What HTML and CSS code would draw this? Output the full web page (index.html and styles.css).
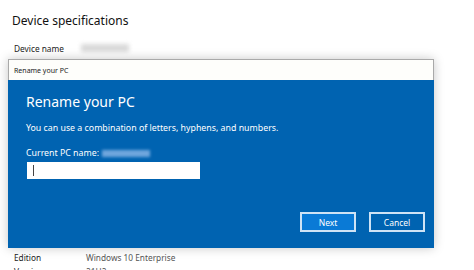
FILE: index.html
```html
<!DOCTYPE html>
<html>
<head>
<meta charset="utf-8">
<link rel="stylesheet" href="styles.css">
</head>
<body>
<div class="page">
  <h1 class="section-title">Device specifications</h1>
  <div class="spec-row first-row">
    <span class="spec-label">Device name</span>
    <span class="spec-value"><span class="blur-name"></span></span>
  </div>
  <div class="hidden-rows">
    <div class="spec-row"><span class="spec-label">Processor</span><span class="spec-value">Intel(R) Core(TM)</span></div>
    <div class="spec-row"><span class="spec-label">Installed RAM</span><span class="spec-value">16.0 GB</span></div>
    <div class="spec-row"><span class="spec-label">System type</span><span class="spec-value">64-bit operating system</span></div>
  </div>
  <div class="spec-row">
    <span class="spec-label">Edition</span>
    <span class="spec-value">Windows 10 Enterprise</span>
  </div>
  <div class="spec-row">
    <span class="spec-label">Version</span>
    <span class="spec-value">21H2</span>
  </div>
</div>

<div class="dialog">
  <div class="dialog-titlebar">Rename your PC</div>
  <div class="dialog-body">
    <h2 class="dialog-heading">Rename your PC</h2>
    <p class="dialog-text">You can use a combination of letters, hyphens, and numbers.</p>
    <div class="current-name">Current PC name: <span class="blur-current"></span></div>
    <div class="name-input"><span class="caret"></span></div>
    <div class="dialog-actions">
      <button class="btn btn-primary">Next</button>
      <button class="btn">Cancel</button>
    </div>
  </div>
</div>
</body>
</html>
```
FILE: styles.css
```css
html, body {
  margin: 0;
  padding: 0;
  background: #ffffff;
  width: 474px;
  height: 270px;
  overflow: hidden;
}
body {
  font-family: "Noto Sans", "Open Sans", sans-serif;
  color: #1a1a1a;
  position: relative;
}
.page {
  padding: 12px 0 0 12px;
  display: flex;
  flex-direction: column;
}
.section-title {
  margin: 0;
  font-size: 12px;
  font-weight: 400;
  line-height: 18px;
  color: #111;
}
.spec-row {
  display: flex;
  align-items: center;
  height: 14px;
  font-size: 8.3px;
  color: #222;
  flex-shrink: 0;
}
.first-row {
  margin-top: 11px;
}
.spec-label {
  width: 72px;
  padding-left: 2px;
}
.spec-value {
  color: #555;
  display: flex;
  align-items: center;
}
.blur-name {
  display: inline-block;
  width: 48px;
  height: 8px;
  margin-left: -5px;
  background: #d9d9d9;
  filter: blur(2px);
}
.hidden-rows {
  height: 195px;
  flex-shrink: 0;
  visibility: hidden;
}

.dialog {
  position: absolute;
  left: 8px;
  top: 59px;
  width: 426px;
  height: 189px;
  box-shadow: 0 0 10px rgba(0, 0, 0, 0.22);
  display: flex;
  flex-direction: column;
}
.dialog-titlebar {
  height: 21px;
  box-sizing: border-box;
  border: 1px solid #a9a9a9;
  border-bottom: none;
  background: #fefefb;
  font-size: 7px;
  color: #222;
  padding-left: 5px;
  display: flex;
  align-items: center;
}
.dialog-body {
  flex: 1;
  background: #0063b1;
  color: #fff;
  padding: 13px 9px 16px 18px;
  display: flex;
  flex-direction: column;
}
.dialog-heading {
  margin: 0;
  font-size: 14px;
  font-weight: 400;
  line-height: 18px;
}
.dialog-text {
  margin: 11px 0 0 0;
  font-size: 8.8px;
  line-height: 12px;
}
.current-name {
  margin-top: 13px;
  font-size: 8.8px;
  line-height: 12px;
  display: flex;
  align-items: center;
  gap: 3px;
}
.blur-current {
  display: inline-block;
  width: 48px;
  height: 7px;
  background: #6fa6dd;
  filter: blur(1.5px);
}
.name-input {
  margin-top: 3px;
  margin-left: 1px;
  width: 173px;
  height: 17px;
  background: #fff;
  display: flex;
  align-items: center;
}
.caret {
  width: 1px;
  height: 11px;
  background: #444;
  margin-left: 6px;
}
.dialog-actions {
  margin-top: auto;
  display: flex;
  justify-content: flex-end;
  gap: 13px;
}
.btn {
  width: 56px;
  height: 20px;
  box-sizing: border-box;
  border: 2px solid #cfe3f5;
  background: #0063b1;
  color: #fff;
  font-family: "Noto Sans", "Open Sans", sans-serif;
  font-size: 8.5px;
  padding: 0;
}
.btn-primary {
  background: #0a7ad6;
}
```
